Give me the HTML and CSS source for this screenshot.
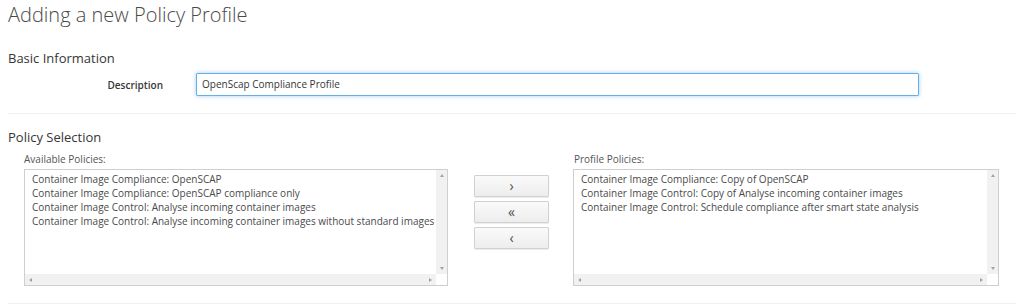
FILE: index.html
```html
<!DOCTYPE html>
<html>
<head>
<meta charset="utf-8">
<link rel="stylesheet" href="styles.css">
</head>
<body>
<div class="page">
  <h1 class="title">Adding a new Policy Profile</h1>
  <h3 class="section-title first">Basic Information</h3>
  <div class="form-row">
    <label class="form-label">Description</label>
    <div class="input">OpenScap Compliance Profile</div>
  </div>
  <hr class="divider">
  <h3 class="section-title">Policy Selection</h3>
  <div class="selection">
    <div class="list-col">
      <div class="list-label">Available Policies:</div>
      <div class="listbox">
        <div class="list-items">
          <div>Container Image Compliance: OpenSCAP</div>
          <div>Container Image Compliance: OpenSCAP compliance only</div>
          <div>Container Image Control: Analyse incoming container images</div>
          <div>Container Image Control: Analyse incoming container images without standard images</div>
        </div>
        <div class="vscroll"><span class="arr up"></span><span class="arr down"></span></div>
        <div class="hscroll"><span class="arr left"></span><span class="arr right"></span></div>
        <div class="corner"></div>
      </div>
    </div>
    <div class="buttons">
      <button class="btn">&rsaquo;</button>
      <button class="btn">&laquo;</button>
      <button class="btn">&lsaquo;</button>
    </div>
    <div class="list-col right">
      <div class="list-label">Profile Policies:</div>
      <div class="listbox">
        <div class="list-items">
          <div>Container Image Compliance: Copy of OpenSCAP</div>
          <div>Container Image Control: Copy of Analyse incoming container images</div>
          <div>Container Image Control: Schedule compliance after smart state analysis</div>
        </div>
        <div class="vscroll"><span class="arr up"></span><span class="arr down"></span></div>
        <div class="hscroll"><span class="arr left"></span><span class="arr right"></span></div>
        <div class="corner"></div>
      </div>
    </div>
  </div>
  <hr class="divider bottom">
</div>
</body>
</html>
```
FILE: styles.css
```css
html, body {
  margin: 0;
  padding: 0;
  background: #fff;
}
body {
  font-family: "Open Sans", "Liberation Sans", sans-serif;
  color: #363636;
  font-size: 10px;
}
.page {
  padding: 0 8px;
}
.title {
  margin: 0;
  padding-top: 1px;
  font-size: 20px;
  font-weight: 300;
  line-height: 28px;
  color: #4a4a4a;
}
.section-title {
  margin: 0;
  font-size: 13px;
  font-weight: 400;
  line-height: 18px;
  color: #363636;
}
.section-title.first {
  margin-top: 20px;
}
.form-row {
  display: flex;
  align-items: center;
  margin-top: 6px;
}
.form-label {
  width: 155px;
  text-align: right;
  font-weight: 600;
  font-size: 10px;
  color: #363636;
}
.input {
  margin-left: 33px;
  width: 716px;
  height: 21px;
  border: 1px solid #66afe9;
  box-shadow: 0 0 4px rgba(102, 175, 233, 0.6);
  font-size: 10px;
  line-height: 21px;
  padding-left: 5px;
  color: #363636;
  border-radius: 1px;
}
.divider {
  border: 0;
  border-top: 1px solid #f0f0f0;
  margin: 17px 0 0 0;
}
.divider + .section-title {
  margin-top: 14px;
}
.selection {
  display: flex;
  align-items: flex-start;
  padding-left: 16px;
  margin-top: 6px;
}
.list-label {
  font-size: 10px;
  line-height: 14px;
  color: #555;
  margin-bottom: 3px;
}
.listbox {
  display: grid;
  grid-template-columns: 1fr 11px;
  grid-template-rows: 1fr 11px;
  width: 422px;
  height: 115px;
  border: 1px solid #cfcfcf;
  background: #fff;
}
.list-col.right .listbox {
  width: 424px;
}
.list-col.right .list-label {
  padding-left: 1px;
}
.list-items {
  padding: 2px 0 0 7px;
  font-size: 10px;
  line-height: 14px;
  color: #4a4a4a;
  white-space: nowrap;
  overflow: hidden;
}
.vscroll {
  background: #f1f1f1;
  display: flex;
  flex-direction: column;
  justify-content: space-between;
  align-items: center;
  padding: 4px 0;
}
.hscroll {
  background: #f1f1f1;
  display: flex;
  justify-content: space-between;
  align-items: center;
  padding: 0 4px;
}
.corner {
  background: #fff;
}
.arr {
  width: 0;
  height: 0;
  border: 2px solid transparent;
}
.arr.up { border-bottom: 3px solid #a3a3a3; border-top: 0; }
.arr.down { border-top: 3px solid #a3a3a3; border-bottom: 0; }
.arr.left { border-right: 3px solid #a3a3a3; border-left: 0; }
.arr.right { border-left: 3px solid #a3a3a3; border-right: 0; }
.buttons {
  display: flex;
  flex-direction: column;
  gap: 4px;
  margin: 23px 24px 0 26px;
}
.btn {
  width: 75px;
  height: 22px;
  border: 1px solid #d1d1d1;
  border-radius: 1px;
  background: linear-gradient(#fafafa, #ededed);
  box-shadow: 0 1px 1px rgba(0, 0, 0, 0.08);
  font-family: "Open Sans", "Liberation Sans", sans-serif;
  font-size: 14px;
  line-height: 18px;
  color: #4d4d4d;
  padding: 0;
}
.divider.bottom {
  margin-top: 17px;
}
```
